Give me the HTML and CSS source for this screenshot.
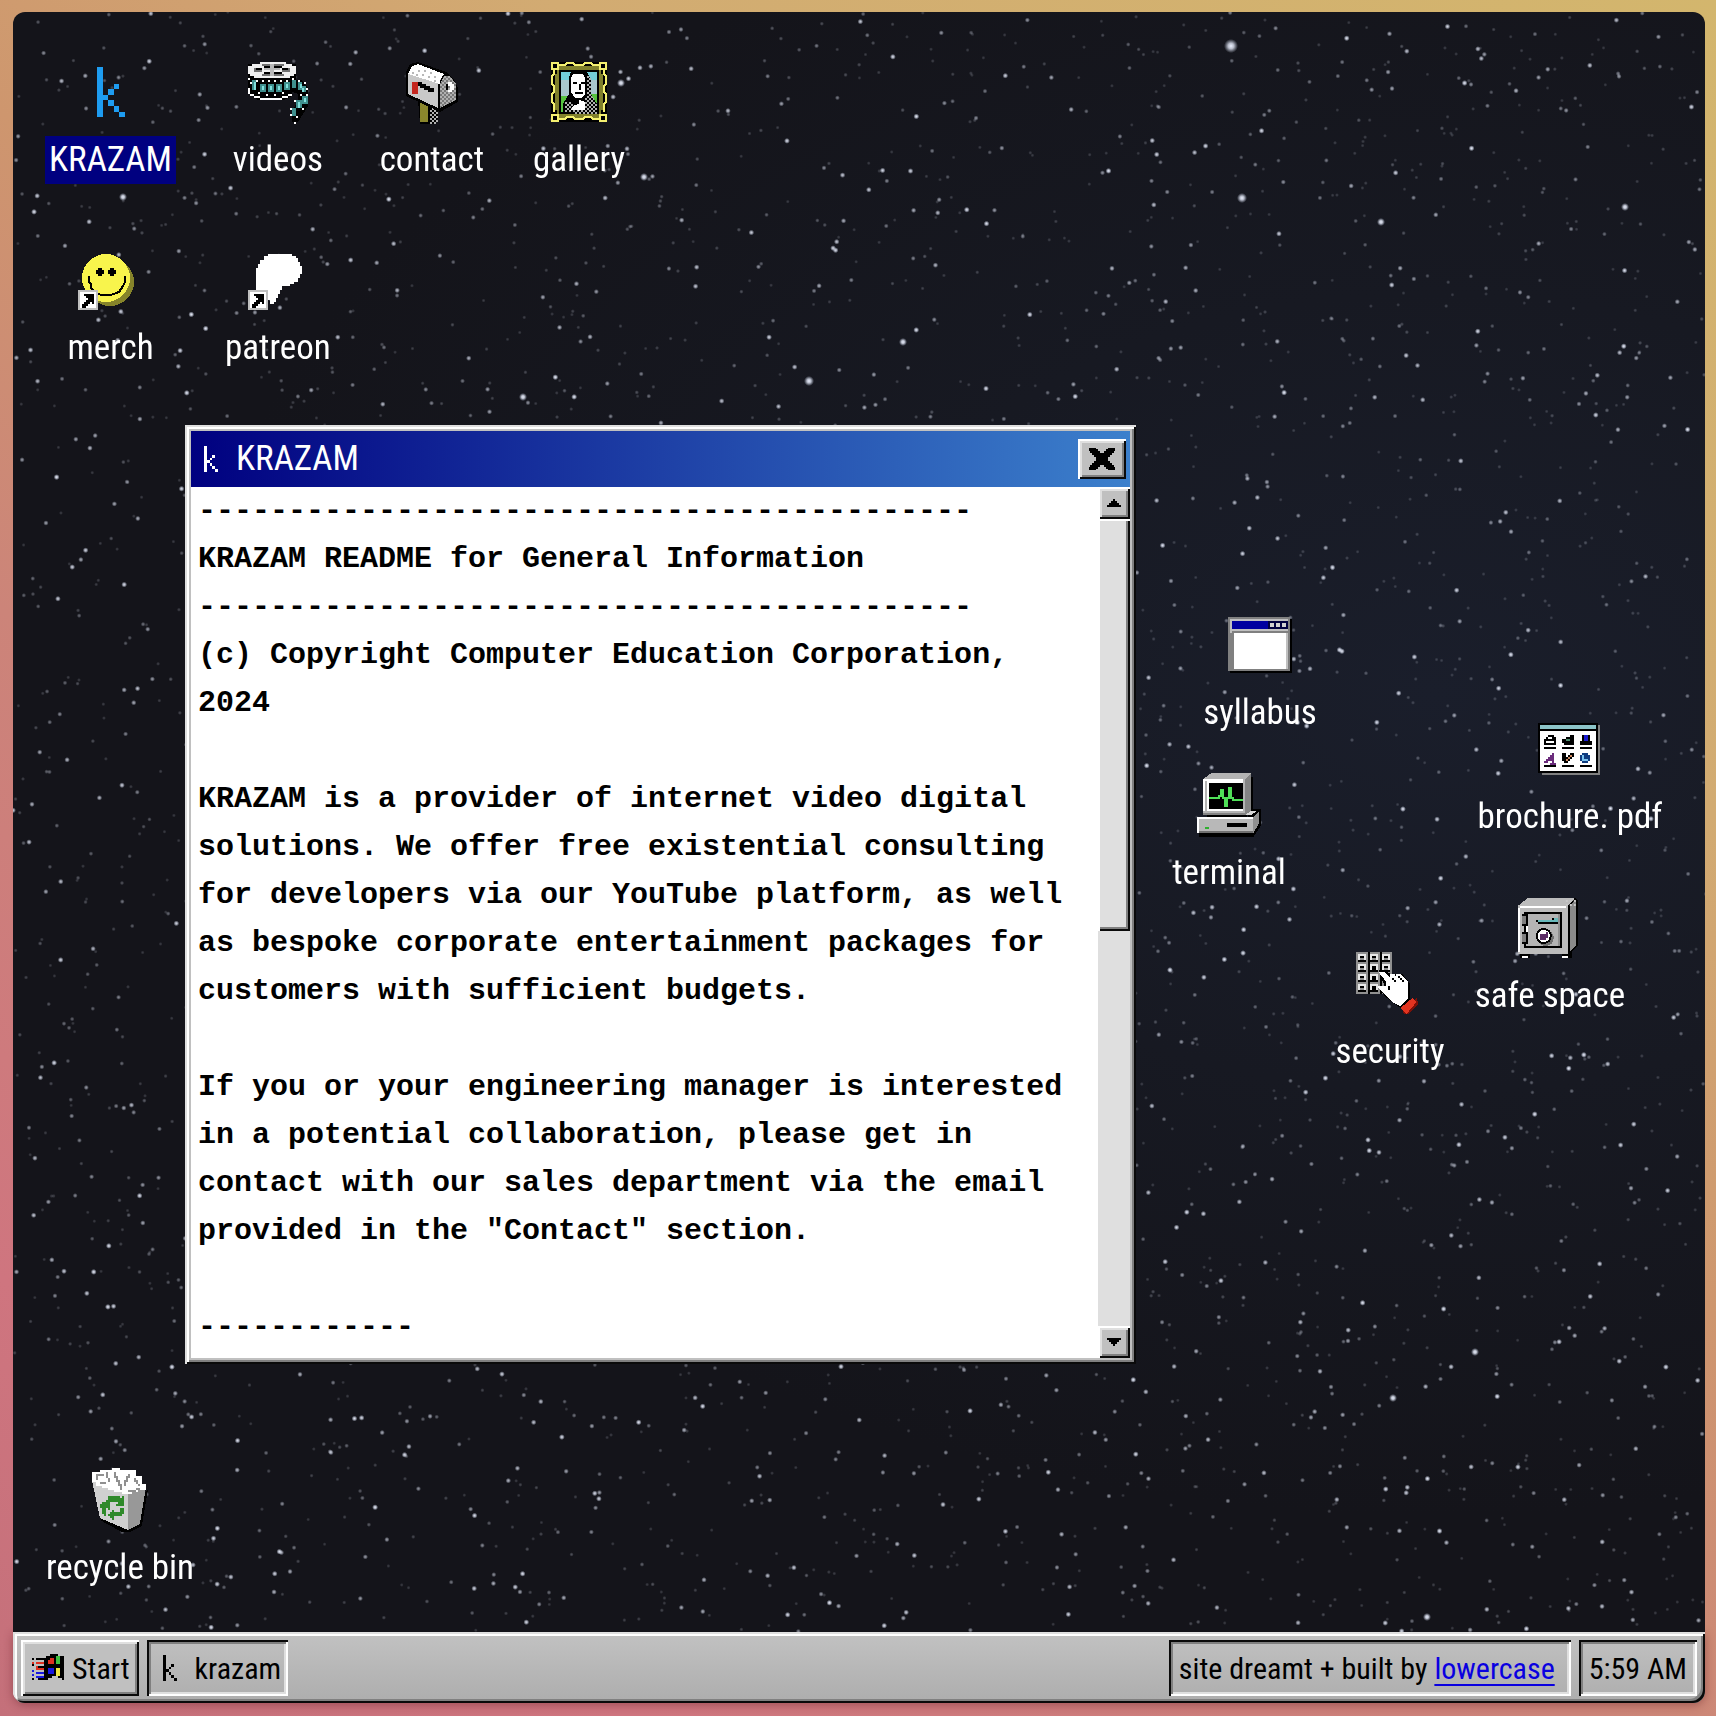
FILE: index.html
```html
<!DOCTYPE html>
<html lang="en">
<head>
<meta charset="utf-8">
<title>KRAZAM</title>
<link rel="stylesheet" href="styles.css">
</head>
<body>
<svg class="defs" aria-hidden="true">
  <symbol id="k" viewBox="0 0 5 9"><path fill="currentColor" d="M0 0h1v5h1V4h1V3h1v1H3v1H2v1h1v1h1v1h1v1H4V8H3V7H2V6H1v3H0z"/></symbol>
  <symbol id="shortcut" viewBox="0 0 10 10"><path fill="#c0c0c0" d="M0 0h10v10H0z"/><path fill="#fff" d="M1 1h8v8H1z"/><path fill="#000" d="M3 2h5v5H7V6H6v1H5v1H4v1H2V7h1V6h1V5h1V4H4V3H3z"/></symbol>
  <pattern id="dither" width="2" height="2" patternUnits="userSpaceOnUse"><path fill="#b0b0b0" d="M0 0h1v1H0zM1 1h1v1H1z"/></pattern>
  <pattern id="dots" width="2" height="2" patternUnits="userSpaceOnUse"><path fill="#c8c8c8" d="M0 0h1v1H0z"/></pattern>
</svg>
<main class="desktop">
  <canvas class="sky" aria-hidden="true"></canvas>
  <nav class="shortcuts">
    <button class="item selected" type="button">
      <span class="picture"><svg class="big-k"><use href="#k"/></svg></span>
      <span class="label">KRAZAM</span>
    </button>
    <button class="item" type="button">
      <svg class="picture" viewBox="0 0 32 32">
        <path fill="#000" d="M1 2h24v8h3l3 4v9l-5 8h-3v-6l3-4v-4l-3-1v2l-4 2H6l-5-4z"/>
        <path fill="#f0f0f0" d="M7 1h13v1h3v1h2v4h-1v1h-2v1H4V8H2V7H1V3h2V2h4z"/>
        <path fill="#707070" d="M8 2h4v1H8zM14 2h5v1h-5zM4 4h4v2H4zM18 4h4v2h-4zM8 7h4v1H8zM14 7h5v1h-5z"/>
        <path fill="#000" d="M9 3h3v1H9zM14 3h4v1h-4zM5 4h3v1H5zM18 4h3v1h-3zM9 6h3v1H9zM14 6h4v1h-4zM11 4h1v1h-1z"/>
        <path fill="#b8b8b8" d="M12 2h2v6h-2zM9 4h8v1H9z"/>
        <path fill="#3f8f8d" d="M3 10h2v5H3zM7 12h3v4H7zM11 12h3v4h-3zM15 12h3v4h-3zM19 11h3v4h-3zM23 10h2v4h-2zM26 11h2v4h-2zM28 13h2v3h-2zM28 18h3v4h-3zM25 20h3v4h-3zM23 24h2v4h-2z"/>
        <path fill="#7fe0dc" d="M4 11h1v4H4zM8 13h1v2H8zM12 13h1v2h-1zM16 13h1v2h-1zM20 12h1v2h-1zM27 12h1v2h-1zM28 14h1v2h-1zM26 21h1v3h-1zM29 19h1v2h-1z"/>
        <path fill="#fff" d="M1 9h1v1H1zM2 11h1v1H2zM5 10h1v1H5zM8 10h1v1H8zM11 10h1v1h-1zM14 10h1v1h-1zM17 10h1v1h-1zM20 10h1v1h-1zM23 9h1v1h-1zM26 10h1v1h-1zM29 11h1v1h-1zM30 14h1v1h-1zM30 17h1v1h-1zM27 17h1v1h-1zM28 24h1v1h-1zM24 20h1v1h-1zM22 24h1v1h-1zM22 27h1v1h-1zM25 28h1v1h-1zM24 31h1v1h-1zM6 16h1v1H6zM10 17h1v1h-1zM14 17h1v1h-1zM18 16h1v1h-1zM1 14h1v3H1zM2 17h2v1H2zM4 18h3v1H4zM7 19h11v1H7zM18 18h3v1h-3zM21 17h2v1h-2z"/>
      </svg>
      <span class="label">videos</span>
    </button>
    <button class="item" type="button">
      <svg class="picture" viewBox="0 0 32 32">
        <path fill="#000" d="M9 20h10v9l-1 3h-8z"/>
        <path fill="#8a862c" d="M10 20h4v11h-4z"/>
        <path fill="url(#dither)" d="M15 22h4v10h-4z"/>
        <path fill="#000" d="M3 6l2-4 4-1 14 5 4 4 2 4v7l-9 5L3 18z"/>
        <path fill="#c8c8c8" d="M4 7l2-4 3-1 13 5-3 5v12L4 17z"/>
        <path fill="#fff" d="M4 7l2-4 3-1 13 5-2 3v2z"/>
        <path fill="#b8b8b8" d="M9 5h1v1H9zM12 5h1v1h-1zM11 7h1v1h-1zM14 8h1v1h-1zM15 6h1v1h-1zM17 8h1v1h-1zM8 7h1v1H8zM17 10h1v1h-1zM6 6h1v1H6z"/>
        <path fill="#777" d="M20 12l2-4h3l3 4v8l-8 4z"/>
        <path fill="url(#dither)" d="M20 12l2-4h3l3 4v8l-8 4z"/>
        <path fill="#fff" d="M24 11h2v1h1v3h-1v1h-2v-1h1v-2h-1z"/>
        <path fill="#000" d="M23 12h1v3h-1zM9 11h2v1h2v1h2v1h2v2h-3v-1h-2v-1h-2v-1H9z"/>
        <path fill="#c4261e" d="M6 11h3v6H6z"/>
      </svg>
      <span class="label">contact</span>
    </button>
    <button class="item" type="button">
      <svg class="picture" viewBox="0 0 32 32">
        <path fill="#000" d="M2 1h28v30H2z"/>
        <path fill="#80802c" d="M5 3h22v26H5zM4 7h24v18H4z"/>
        <path fill="none" stroke="#f4f070" d="M2.500 1.500h3v3h-3zM26.500 1.500h3v3h-3zM2.500 27.500h3v3h-3zM26.500 27.500h3v3h-3zM6 2.500h3l1-1h3l1 1h4l1-1h3l1 1h3M6 29.500h3l1-1h3l1 1h4l1-1h3l1 1h3M3.500 5v2l-1 1v4l1 1v3l-1 1v4l1 1v4M28.500 5v2l1 1v4l-1 1v3l1 1v4l-1 1v4"/>
        <path fill="#000" d="M6 5h20v22H6z"/>
        <path fill="#a9c8cc" d="M7 6h18v20H7z"/>
        <path fill="#72ccd8" d="M7 6h5v4H7zM20 6h5v4h-5z"/>
        <path fill="#55c23e" d="M7 18h3v8H7zM22 17h3v7h-3z"/>
        <path fill="#000" d="M12 6h8l2 4v7l3 5v5H8v-5l3-5V9z"/>
        <path fill="url(#dither)" d="M20 8h2v9l3 5v5H13v-2h6v-6h1zM9 21h4v5H9z"/>
        <path fill="#fff" d="M13 7h5l1 2v8l-2 2h-3l-2-3V9zM13 23l3-1v-2l3 1v4h-7z"/>
        <path fill="#000" d="M13 11h2v1h-2zM17 11h2v1h-2zM16 12h1v3h-1zM14 16h4v1h-4z"/>
      </svg>
      <span class="label">gallery</span>
    </button>
    <button class="item" type="button">
      <svg class="picture" viewBox="0 0 32 32">
        <circle cx="16" cy="17" r="12" fill="#86842a"/>
        <circle cx="14" cy="15" r="12" fill="#f8f44c"/>
        <path fill="#000" d="M10 10h2v1h1v2h-1v1h-2v-1H9v-2h1zM16 10h2v1h1v2h-1v1h-2v-1h-1v-2h1z"/>
        <path fill="none" stroke="#000" d="M5.500 14v3l1 1v2l2 2 3 1.500h5l4-1.500 2-3 1-2v-3"/>
        <use href="#shortcut" x="0" y="21" width="10" height="10"/>
      </svg>
      <span class="label">merch</span>
    </button>
    <button class="item" type="button">
      <svg class="picture" viewBox="0 0 32 32">
        <path fill="#fff" d="M11 3h12v1h2v1h1v2h1v2h1v4h-1v2h-1v2h-2v1h-2v1h-4v2h-1v2h-1v2h-1v2h-1v1h-2v-2H5V10h1V8h1V6h2V4h2z"/>
        <use href="#shortcut" x="1" y="21" width="10" height="10"/>
      </svg>
      <span class="label">patreon</span>
    </button>
  </nav>

  <button class="item free bin" type="button">
    <svg class="picture" viewBox="0 0 32 32">
      <path fill="#000" d="M26 14l4-3-3 18-6 3h-4L6 26z"/>
      <path fill="#d0d0d0" d="M2 6l18 6v19L6 25z"/>
      <path fill="#989898" d="M20 12l9-2-3 18-6 3z"/>
      <path fill="#fff" d="M2 2h4V1h6V0h4v1h8v3h3v4h2v3h-4v1h-3v1h-5v-1h-4v-1h-3v-1H7V9H4V7H2z"/>
      <path fill="#909090" d="M4 3h4v1H5v2H4zM9 2h1v3h1v2h-1V5H9zM13 2h1v2h1v2h1v2h1v3h-1V9h-1V7h-1V5h-1zM20 3h1v2h-1v2h-1v2h-1V6h1V4h1zM23 5h1v1h1v2h1v1h-1V8h-1V7h-1zM6 7h3v1H6zM20 11h4v-1h2v1h-2v1h-4z"/>
      <path fill="#2f8a2a" d="M10 14h6v1h1v-1h1v5h-4v-1h1v-1h-4v1h-1v1H9v-3h1zM7 17h4v4h-1v-1H9v4H8v-1H7v-3H6v-2h1zM12 21h1v1h3v-2h2v3h-1v1h-4v2h-1v-1h-1v-1h-1v-1h1v-1h1z"/>
    </svg>
    <span class="label">recycle bin</span>
  </button>
  <button class="item free syllabus" type="button">
    <svg class="picture" viewBox="0 0 32 32">
      <path fill="#000" d="M1 3h31v27H1z"/><path fill="#808080" d="M0 2h31v27H0z"/><path fill="#c0c0c0" d="M1 3h29v7H1zM29 9h1v19h-1z"/>
      <path fill="#0000a0" d="M2 4h28v4H2z"/><path fill="#000040" d="M20 4h10v4H20z"/><path fill="#d0d0d0" d="M21 5h2v2h-2zM24 5h2v2h-2zM27 5h2v2h-2z"/><path fill="#808080" d="M2 9h28v1H2z"/><path fill="#fff" d="M3 10h26v18H3z"/>
    </svg>
    <span class="label">syllabus</span>
  </button>
  <button class="item free terminal" type="button">
    <svg class="picture" viewBox="0 0 32 32">
      <path fill="#000" d="M26 2h2v16h4v8l-4 6H1v-2h24z"/>
      <path fill="#b4b4b4" d="M7 0h20v1L24 4v17H3V3z"/>
      <path fill="#848484" d="M24 3l3-3v19l-3 2zM3 20h21v1H3z"/>
      <path fill="#fff" d="M3 3h20v1H4v15H3z"/>
      <path fill="#fff" d="M5 4h18v15H5z"/><path fill="#000" d="M6 5h17v13H6z"/>
      <path fill="none" stroke="#50e058" d="M6 12.500h5v-1h1v-3h1v4h1v4h1v-4h1v-5h1v5h1v1h5"/>
      <path fill="#b8b8b8" d="M0 22h28v8H0z"/><path fill="#909090" d="M28 22l3-3v6l-3 5z"/><path fill="#d8d8d8" d="M3 21h24l3-2h-3l-3 2z"/><path fill="#fff" d="M0 22h28v1H1v7H0z"/><path fill="#707070" d="M1 29h27v1H1z"/>
      <path fill="#000" d="M15 25h10v2H15zM5 21h20v1H5z"/><path fill="#30b030" d="M4 27h2v1H4z"/>
    </svg>
    <span class="label">terminal</span>
  </button>
  <button class="item free brochure" type="button">
    <svg class="picture" viewBox="0 0 32 32">
      <path fill="#808080" d="M2 4h29v25H2z"/><path fill="#000" d="M0 3h30v25H0z"/><path fill="#fff" d="M1 7h28v20H1z"/><path fill="#8cc4c8" d="M1 4h28v2H1z"/>
      <path fill="#000" d="M3 15h6v1H3zM12 15h6v1h-6zM21 15h6v1h-6zM3 24h6v1H3zM12 24h6v1h-6zM21 24h6v1h-6zM5 9h3v1h1v4H3v-3h1v-1h1zM14 10h2V9h2v5h-5v-1h-1v-2h2zM22 9h4v3h1v2h-6v-2h1z"/>
      <path fill="#fff" d="M5 10h2v1H5zM4 12h4v1H4z"/><path fill="#4f8f6f" d="M14 11h2v1h-2z"/><path fill="#1a1ad0" d="M23 9h2v3h-2z"/>
      <path fill="#6b2c7c" d="M7 18h1v5h1v1H6v-1h1v-1H5v1H3v-1h1v-1h1v-1h1v-1h1z"/><path fill="#000" d="M12 18h2v2h1v-1h1v-1h2v2h-1v1h-1v1h-1v1h-2v-1h-1z"/><path fill="#d08a60" d="M14 21h1v-1h1v-1h1v1h-1v1h-1v1h-1z"/><path fill="#103c80" d="M22 18h3v1h1v3h-1v1h-3v-1h-1v-3h1z"/><path fill="#7cc4f0" d="M22 19h1v2h2v1h-3z"/>
    </svg>
    <span class="label">brochure. pdf</span>
  </button>
  <button class="item free safe" type="button">
    <svg class="picture" viewBox="0 0 32 32">
      <path fill="#000" d="M0 5l5-4h24l1 1v23l-3 3v3h-5v-2H6v2H1v-3H0z"/>
      <path fill="#bcbcbc" d="M0 5l5-4h23v1l-3 3v24H0z"/><path fill="#8a8a8a" d="M26 5l3-3v23l-3 3z"/>
      <path fill="#fff" d="M1 5h23v1H1v22H0V6h1zM2 30h3v1H2zM22 30h3v1h-3z"/><path fill="url(#dots)" d="M23 1h6v4h-6z"/>
      <path fill="#000" d="M3 8h19v18H3z"/><path fill="#b4b4b4" d="M4 9h17v16H4z"/><path fill="#909090" d="M20 9h1v16h-1z"/><path fill="#000" d="M2 9h3v6H2zM2 18h3v6H2z"/><path fill="#808080" d="M2 10h2v4H2zM2 19h2v4H2z"/><path fill="#fff" d="M4 15h1v3H4z"/>
      <path fill="#000" d="M9 12h8v-1h3v3H10v-1H9z"/><path fill="#68b8ba" d="M10 12h8v-1h2v2H10z"/>
      <circle cx="14" cy="21" r="4" fill="#707070"/><circle cx="13" cy="20" r="4" fill="#000"/><circle cx="13" cy="20" r="3" fill="#fff"/><path fill="#5b2c66" d="M11 19h3v-1h1v3h-1v1h-3z"/>
    </svg>
    <span class="label">safe space</span>
  </button>
  <button class="item free security" type="button">
    <svg class="picture" viewBox="0 0 32 32">
      <path fill="#909090" d="M-1 0h18v21H-1z"/>
      <path fill="#000" d="M0 1h4v4H0zM6 1h4v4H6zM12 1h4v4h-4zM0 6h4v4H0zM6 6h4v4H6zM12 6h4v4h-4zM0 11h4v4H0zM6 11h4v4H6zM0 16h4v4H0zM6 16h4v4H6zM5 0h1v21H5zM11 0h1v21h-1z"/>
      <path fill="#e8e8e8" d="M0 1h4v3H3V2H1v2H0zM6 1h4v3H9V2H7v2H6zM12 1h4v3h-1V2h-2v2h-1zM0 6h4v3H3V7H1v2H0zM6 6h4v3H9V7H7v2H6zM12 6h4v3h-1V7h-2v2h-1zM0 11h4v3H3v-2H1v2H0zM6 11h4v3H9v-2H7v2H6zM0 16h4v3H3v-2H1v2H0zM6 16h4v3H9v-2H7v2H6z"/>
      <path fill="#909090" d="M1 3h2v1H1zM7 3h2v1H7zM13 3h2v1h-2zM1 8h2v1H1zM13 8h2v1h-2zM1 13h2v1H1zM1 18h2v1H1z"/>
      <path fill="#000" d="M10 9h3l3 2h6l4 5v8l-5 4-8-6-3-5h3z"/>
      <path fill="#fff" d="M10 10h3l3 3v-2h2l1 2v-2h2l4 4v8l-4 4-4-2-4-4-3-3v-1h4v-2z"/>
      <path fill="#000" d="M17 13h1v1h1v1h-1v-1h-1zM20 12h1v1h1v1h1v1h-1v-1h-1v-1h-1zM15 17h1v2h-1z"/>
      <path fill="#7c1008" d="M22 30l7-7 1 3-5 5h-2z"/><path fill="#e23420" d="M21 28l6-5 2 2-5 6z"/>
    </svg>
    <span class="label">security</span>
  </button>

  <section class="window" aria-label="KRAZAM">
    <header class="titlebar">
      <svg class="small-k"><use href="#k"/></svg>
      <h1>KRAZAM</h1>
      <button class="close" type="button" aria-label="Close"><svg viewBox="0 0 13 11"><path d="M0 0h3v1h1v1h1v1h1v1h1V3h1V2h1V1h1V0h3v1h-1v1h-1v1h-1v1H9v1H8v1h1v1h1v1h1v1h1v1h1v1h-3v-1H9V9H8V8H7V7H6v1H5v1H4v1H3v1H0v-1h1V9h1V8h1V7h1V6h1V5H4V4H3V3H2V2H1V1H0z"/></svg></button>
    </header>
    <div class="body">
      <div class="readme">-------------------------------------------
KRAZAM README for General Information
-------------------------------------------
(c) Copyright Computer Education Corporation, 2024

KRAZAM is a provider of internet video digital solutions. We offer free existential consulting for developers via our YouTube platform, as well as bespoke corporate entertainment packages for customers with sufficient budgets.

If you or your engineering manager is interested in a potential collaboration, please get in contact with our sales department via the email provided in the "Contact" section.

------------</div>
      <div class="scrollbar">
        <button type="button" aria-label="Scroll up"><svg viewBox="0 0 7 4"><path d="M3 0h1v1h1v1h1v1h1v1H0V3h1V2h1V1h1z"/></svg></button>
        <div class="track"><div class="thumb"></div></div>
        <button type="button" aria-label="Scroll down"><svg viewBox="0 0 7 4"><path d="M0 0h7v1H6v1H5v1H4v1H3V3H2V2H1V1H0z"/></svg></button>
      </div>
    </div>
  </section>
</main>
<footer class="taskbar">
  <button class="start" type="button"><svg class="flag" viewBox="0 0 16 14">
      <path fill="#000" d="M7 1h2V0h4v1h3v12h-1v-1h-2v-1h-3v1H8v1H6V2h1zM2 2h4v1H2zM2 6h4v1H2zM3 12h4v1H3zM0 2h1v1H0zM0 5h1v1H0zM0 12h1v1H0z"/>
      <path fill="#e03020" d="M9 2h2v3H8V3h1zM2 4h4v1H2zM3 7h3v1H2V6h1zM0 4h1v1H0z"/><path fill="#40c040" d="M12 1h2v4h-2z"/><path fill="#1818e0" d="M8 7h3v3H8zM2 9h4v1H2zM2 11h4v1H2zM0 8h1v1H0zM0 10h1v1H0z"/><path fill="#f0e840" d="M12 7h2v4h-2z"/>
    </svg>Start</button>
  <button class="task" type="button"><svg class="small-k"><use href="#k"/></svg>krazam</button>
  <p class="sunken credit">site dreamt + built by <a href="#lowercase">lowercase</a></p>
  <time class="sunken">5:59 AM</time>
</footer>
<script src="sky.js"></script>
</body>
</html>
```
FILE: styles.css
```css
* { box-sizing: border-box; }

body {
  margin: 0;
  min-height: 100vh;
  padding: 12px 11px 13px 13px;
  display: flex;
  flex-direction: column;
  background: linear-gradient(215deg, #d3b66d 0%, #d2ab72 28%, #ce966e 45%, #cc8479 62%, #cf757f 85%, #c4707a 100%);
  font-family: "Roboto Condensed", "Liberation Sans", Arial, sans-serif;
  font-size: 30px;
  color: #000;
}

button { font: inherit; color: inherit; border: 0; padding: 0; background: none; }
svg { display: block; shape-rendering: crispEdges; }
.defs { position: absolute; width: 0; height: 0; }

.desktop {
  position: relative;
  flex: 1;
  overflow: hidden;
  border-radius: 12px 12px 0 0;
  background: radial-gradient(ellipse at 84% 42%, #1a1e2b 0%, #171922 30%, #14141a 62%);
}
.sky { position: absolute; inset: 0; width: 100%; height: 100%; }

.shortcuts {
  position: relative;
  display: grid;
  grid-template-columns: repeat(4, max-content);
  justify-items: center;
  gap: 64px 49px;
  padding: 48px 32px;
}
.item { display: flex; flex-direction: column; align-items: center; gap: 12px; color: #fff; }
.picture { width: 64px; height: 64px; overflow: visible; display: block; }
span.picture { display: grid; place-items: center; }
.big-k { width: 28px; height: 52px; color: #1e9cf0; }
.label { font-size: 35px; line-height: 48px; white-space: nowrap; }
.selected .label { padding: 0 4px; background: #000080; }

.free { position: absolute; transform: translateX(-50%); }
.bin { left: 107px; top: 1456px; }
.syllabus { left: 1247px; top: 601px; }
.terminal { left: 1216px; top: 761px; }
.brochure { left: 1557px; top: 705px; }
.safe { left: 1537px; top: 884px; }
.security { left: 1377px; top: 940px; }

.window {
  position: absolute;
  left: 172px;
  top: 413px;
  width: 951px;
  padding: 6px;
  background: #c0c0c0;
  box-shadow: inset 2px 2px #dfdfdf, inset -2px -2px #0a0a0a, inset 4px 4px #fff, inset -4px -4px #808080;
}
.titlebar {
  display: flex;
  align-items: center;
  height: 56px;
  padding: 0 4px 0 13px;
  gap: 18px;
  color: #fff;
  background: linear-gradient(90deg, #000080, #3c80cc);
}
.titlebar h1 { flex: 1; margin: 0; font-size: 35px; font-weight: 400; line-height: 52px; }
.small-k { width: 14px; height: 26px; }
.close { width: 48px; height: 40px; display: grid; place-items: center; }
.close svg { width: 26px; height: 22px; }
.close path { stroke: #000; }
.close, .scrollbar button, .start {
  background: #c0c0c0;
  box-shadow: inset 2px 2px #fff, inset -2px -2px #0a0a0a, inset 4px 4px #dfdfdf, inset -4px -4px #808080;
}
.body { display: flex; background: #fff; }
.readme {
  flex: 1;
  padding: 0 8px 7px 7px;
  font: bold 30px/48px "Liberation Mono", "Courier New", monospace;
  white-space: pre-wrap;
}
.scrollbar { width: 32px; display: flex; flex-direction: column; background: #dfdfdf; }
.scrollbar button { height: 32px; display: grid; place-items: center; }
.scrollbar svg { width: 14px; height: 8px; }
.track { flex: 1; }
.thumb { height: 51%; background: #dfdfdf; box-shadow: inset 2px 2px #fff, inset -2px -2px #0a0a0a, inset -4px -4px #808080; }

.taskbar {
  display: flex;
  gap: 8px;
  padding: 8px;
  height: 71px;
  border-radius: 0 0 12px 12px;
  background: linear-gradient(#c2c2c2, #adadad);
  box-shadow: inset 2px 2px #dfdfdf, inset -2px -2px #0a0a0a, inset 4px 4px #fff, inset -4px -4px #808080, 0 2px 10px rgba(90, 20, 30, .4);
}
.taskbar > * { display: flex; align-items: center; height: 56px; margin: 0; white-space: pre; }
.start { padding: 0 9px 0 11px; gap: 8px; }
.flag { width: 32px; height: 28px; }
.task { padding: 0 7px 0 16px; gap: 18px; }
.task, .sunken { box-shadow: inset 2px 2px #0a0a0a, inset -2px -2px #fff, inset 4px 4px #808080, inset -4px -4px #dfdfdf; }
.sunken { padding: 0 10px; }
.credit { margin-left: auto; padding-right: 16px; }
.credit a { color: #0a00e0; text-underline-offset: 5px; text-decoration-thickness: 2px; }
```
FILE: sky.js
```js
const sky = document.querySelector('.sky');
const pen = sky.getContext('2d');

// x, y, radius of the brightest stars
const bright = [[1218, 34, 5], [796, 369, 3], [110, 185, 2], [608, 71, 2], [631, 165, 2], [1229, 186, 3], [1368, 210, 2], [1462, 1340, 2], [1380, 1386, 2], [1612, 195, 2], [890, 330, 2], [510, 385, 2], [1414, 1605, 2], [1695, 882, 2]];

function drawSky() {
  const w = sky.width = sky.clientWidth;
  const h = sky.height = sky.clientHeight;
  let seed = 20240;
  const rnd = () => (seed = (seed * 16807) % 2147483647) / 2147483647;
  const star = (x, y, r, a) => {
    const glow = pen.createRadialGradient(x, y, 0, x, y, r);
    glow.addColorStop(0, `rgba(235,240,255,${a})`);
    glow.addColorStop(.4, `rgba(225,230,245,${a * .8})`);
    glow.addColorStop(1, 'rgba(200,210,230,0)');
    pen.fillStyle = glow;
    pen.fillRect(x - r, y - r, 2 * r, 2 * r);
  };
  for (let i = 0; i < w * h / 650; i++) {
    const b = rnd();
    star(rnd() * w, rnd() * h, 2 + b * b, .18 + b * b * b * .8);
  }
  bright.forEach(([x, y, r]) => star(x, y, r + 2, 1));
}
drawSky();
addEventListener('resize', drawSky);
```
